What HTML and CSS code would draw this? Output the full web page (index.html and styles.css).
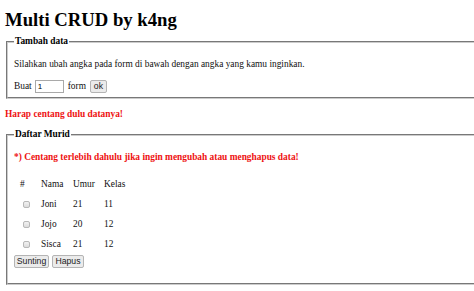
FILE: index.html
```html
<!DOCTYPE html>
<html>
<head>
<meta charset="utf-8">
<title>Multi CRUD by k4ng</title>
<link rel="stylesheet" href="styles.css">
</head>
<body>
<div class="page">
  <h1 class="title">Multi CRUD by k4ng</h1>
  <fieldset class="box box-add">
    <legend class="legend">Tambah data</legend>
    <p class="intro">Silahkan ubah angka pada form di bawah dengan angka yang kamu inginkan.</p>
    <form class="make-row">
      <span>Buat</span>
      <input class="num" type="text" value="1">
      <span class="form-word">form</span>
      <button class="btn btn-ok" type="button">ok</button>
    </form>
  </fieldset>
  <p class="alert">Harap centang dulu datanya!</p>
  <fieldset class="box box-list">
    <legend class="legend">Daftar Murid</legend>
    <p class="note">*) Centang terlebih dahulu jika ingin mengubah atau menghapus data!</p>
    <table class="grid">
      <colgroup>
        <col class="w1"><col class="w2"><col class="w3"><col class="w4">
      </colgroup>
      <thead>
        <tr><th>#</th><th>Nama</th><th>Umur</th><th>Kelas</th></tr>
      </thead>
      <tbody>
        <tr><td><span class="chk"></span></td><td>Joni</td><td>21</td><td>11</td></tr>
        <tr><td><span class="chk"></span></td><td>Jojo</td><td>20</td><td>12</td></tr>
        <tr><td><span class="chk"></span></td><td>Sisca</td><td>21</td><td>12</td></tr>
      </tbody>
    </table>
    <div class="actions">
      <button class="btn btn-edit" type="button">Sunting</button>
      <button class="btn btn-del" type="button">Hapus</button>
    </div>
  </fieldset>
</div>
</body>
</html>
```
FILE: styles.css
```css
html, body {
  margin: 0;
  padding: 0;
  background: #ffffff;
}
body {
  font-family: "Liberation Serif", "Times New Roman", serif;
  font-size: 9.4px;
  color: #111;
}
.page {
  width: 469px;
  padding: 0 0 0 5px;
}
.title {
  font-size: 18.7px;
  font-weight: bold;
  margin: 0;
  padding-top: 9px;
  line-height: 22px;
  color: #000;
}
.box {
  border: 2px groove #cccccc;
  border-right: none;
  margin: 5px 0 0 1px;
  padding: 0 0 0 6px;
  min-width: 0;
}
.legend {
  font-weight: bold;
  padding: 0 1px;
  line-height: 11px;
  color: #000;
}
.intro {
  margin: 11px 0 0;
  line-height: 12px;
}
.make-row {
  display: flex;
  align-items: center;
  margin: 9px 0 0;
  height: 14px;
  padding-bottom: 4px;
}
.num {
  box-sizing: border-box;
  width: 29px;
  height: 13px;
  border: 1px solid #a9a9a9;
  padding: 0 2px;
  font-family: "Liberation Sans", Arial, sans-serif;
  font-size: 8px;
  margin: 0 4px 0 3px;
}
.form-word {
  margin-right: 4px;
}
.btn {
  box-sizing: border-box;
  font-family: "Liberation Sans", Arial, sans-serif;
  font-size: 8.7px;
  background: #ebebeb;
  border: 1px solid #b4b4b4;
  border-radius: 2px;
  padding: 0;
  height: 13px;
  line-height: 11px;
  color: #222;
  margin: 0;
}
.btn-ok { width: 17px; }
.btn-edit { width: 35px; }
.btn-del { width: 32px; }
.alert {
  margin: 9px 0 0;
  color: #ee1111;
  font-weight: bold;
  line-height: 12px;
}
.box-list {
  margin-top: 9px;
  padding-bottom: 15px;
}
.note {
  margin: 11px 0 0;
  color: #ee1111;
  font-weight: bold;
  line-height: 12px;
}
.grid {
  border-collapse: collapse;
  table-layout: fixed;
  margin: 11px 0 0 6px;
}
.w1 { width: 21px; }
.w2 { width: 32px; }
.w3 { width: 31px; }
.w4 { width: 40px; }
.grid th, .grid td {
  font-weight: normal;
  text-align: left;
  padding: 0;
  height: 20px;
}
.chk {
  display: inline-block;
  box-sizing: border-box;
  width: 7px;
  height: 7px;
  margin-left: 3px;
  border: 1px solid #b8b8b8;
  border-radius: 2px;
  background: linear-gradient(#f2f2f2, #dcdcdc);
  vertical-align: middle;
}
.actions {
  display: flex;
  gap: 3px;
  margin-top: 1px;
}
```
